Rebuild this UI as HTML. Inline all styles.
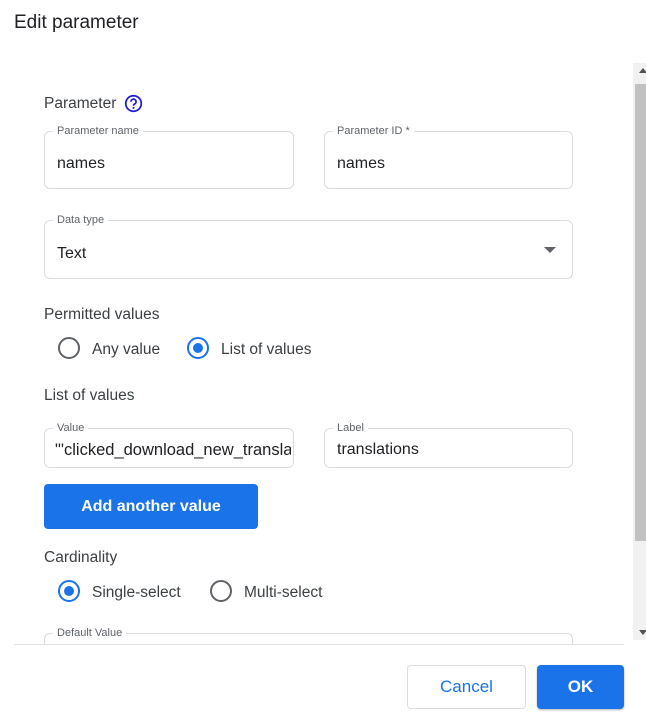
<!DOCTYPE html>
<html><head><style>
body{margin:0;width:646px;height:719px;background:#fff;font-family:"Liberation Sans",Arial,sans-serif;color:#202124;position:relative;overflow:hidden}
.a{position:absolute}
.box{position:absolute;border:1px solid #dadce0;border-radius:6px;box-sizing:border-box}
.lbl{position:absolute;top:-8px;left:8px;background:#fff;padding:0 4px;font-size:11px;color:#5f6368;line-height:14px}
.val{position:absolute;left:12px;font-size:16px;color:#202124;white-space:nowrap;overflow:hidden}
.t{font-size:15.5px;color:#3c4043}
.radio{position:absolute;width:22px;height:22px;border:2px solid #5f6368;border-radius:50%;box-sizing:border-box}
.radio.on{border-color:#1a73e8}
.radio.on::after{content:"";position:absolute;left:4px;top:4px;width:10px;height:10px;border-radius:50%;background:#1a73e8}
</style></head><body>
<div class="a" style="left:14px;top:12px;font-size:19px;color:#202124">Edit parameter</div>
<div class="a" style="left:0;top:48px;width:633px;height:596px;overflow:hidden">
  <div class="a t" style="left:44px;top:47px">Parameter</div>
  <svg class="a" style="left:124px;top:46px" width="19" height="19" viewBox="0 0 20 20"><circle cx="10" cy="10" r="8.2" fill="none" stroke="#1a1adb" stroke-width="1.8"/><path d="M7.3 8.2a2.7 2.7 0 1 1 3.8 2.4c-.8.4-1.1.9-1.1 1.8" fill="none" stroke="#1a1adb" stroke-width="1.8"/><circle cx="10" cy="14.6" r="1.1" fill="#1a1adb"/></svg>
  <div class="box" style="left:44px;top:83px;width:250px;height:58px"><span class="lbl">Parameter name</span><span class="val" style="top:23px">names</span></div>
  <div class="box" style="left:324px;top:83px;width:249px;height:58px"><span class="lbl">Parameter ID *</span><span class="val" style="top:23px">names</span></div>
  <div class="box" style="left:44px;top:172px;width:529px;height:59px"><span class="lbl">Data type</span><span class="val" style="top:24px">Text</span>
    <div class="a" style="right:16px;top:26px;width:0;height:0;border-left:6px solid transparent;border-right:6px solid transparent;border-top:6px solid #5f6368"></div></div>
  <div class="a t" style="left:44px;top:258px">Permitted values</div>
  <div class="radio" style="left:58px;top:289px"></div><div class="a t" style="left:92px;top:293px">Any value</div>
  <div class="radio on" style="left:187px;top:289px"></div><div class="a t" style="left:221px;top:293px">List of values</div>
  <div class="a t" style="left:44px;top:339px">List of values</div>
  <div class="box" style="left:44px;top:380px;width:250px;height:40px"><span class="lbl">Value</span><span class="val" style="top:12px;left:10px;width:236px;font-size:16.5px">"'clicked_download_new_translations</span></div>
  <div class="box" style="left:324px;top:380px;width:249px;height:40px"><span class="lbl">Label</span><span class="val" style="top:12px">translations</span></div>
  <div class="a" style="left:44px;top:436px;width:214px;height:45px;background:#1a73e8;border-radius:4px;color:#fff;font-size:16px;font-weight:bold;text-align:center;line-height:45px">Add another value</div>
  <div class="a t" style="left:44px;top:501px">Cardinality</div>
  <div class="radio on" style="left:58px;top:532px"></div><div class="a t" style="left:92px;top:536px">Single-select</div>
  <div class="radio" style="left:210px;top:532px"></div><div class="a t" style="left:244px;top:536px">Multi-select</div>
  <div class="box" style="left:44px;top:585px;width:529px;height:58px"><span class="lbl">Default Value</span></div>
</div>
<div class="a" style="left:633px;top:63px;width:13px;height:577px;background:#f1f1f1"></div>
<div class="a" style="left:635px;top:84px;width:11px;height:457px;background:#c1c1c1"></div>
<div class="a" style="left:639px;top:68px;width:0;height:0;border-left:4px solid transparent;border-right:4px solid transparent;border-bottom:5px solid #505050"></div>
<div class="a" style="left:639px;top:630px;width:0;height:0;border-left:4px solid transparent;border-right:4px solid transparent;border-top:5px solid #505050"></div>
<div class="a" style="left:14px;top:644px;width:610px;height:1px;background:#e0e0e0"></div>
<div class="a" style="left:407px;top:665px;width:119px;height:44px;border:1px solid #dadce0;border-radius:4px;box-sizing:border-box;color:#1a73e8;font-size:17px;text-align:center;line-height:42px">Cancel</div>
<div class="a" style="left:537px;top:665px;width:87px;height:44px;background:#1a73e8;border-radius:4px;color:#fff;font-size:17px;font-weight:bold;text-align:center;line-height:44px;box-shadow:0 1px 2px rgba(0,0,0,.3)">OK</div>
</body></html>
